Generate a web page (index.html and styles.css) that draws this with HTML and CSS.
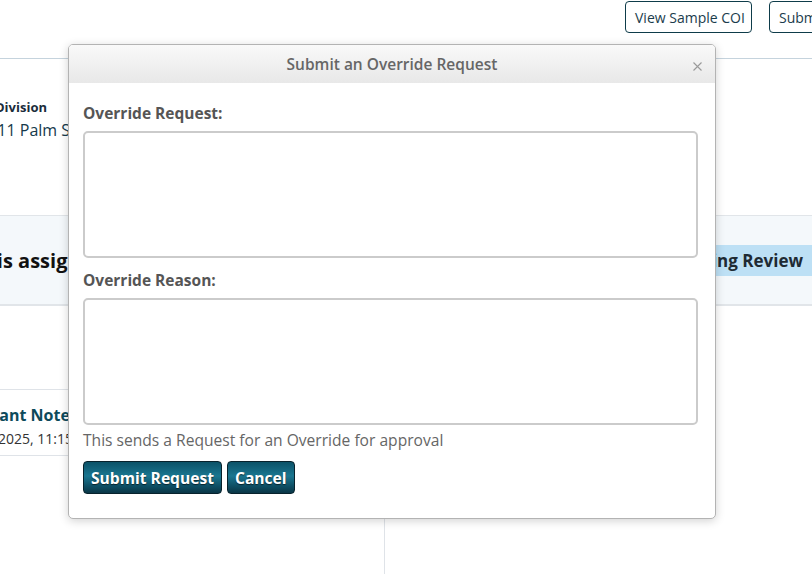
FILE: index.html
```html
<!DOCTYPE html>
<html lang="en">
<head>
<meta charset="utf-8">
<title>Submit an Override Request</title>
<link rel="stylesheet" href="styles.css">
</head>
<body>
<div class="page">
  <header class="topbar">
    <button class="outline-btn">View Sample COI</button>
    <button class="outline-btn">Submit Certificate</button>
  </header>

  <section class="info">
    <div class="info-label">Division</div>
    <div class="info-value">1211 Palm Street</div>
  </section>

  <section class="band">
    <h2 class="band-title">this assignment</h2>
    <span class="status-badge">Pending Review</span>
  </section>

  <section class="columns">
    <div class="col-left">
      <div class="note">
        <div class="note-title">Applicant Note</div>
        <div class="note-date">2025, 11:15 AM</div>
      </div>
    </div>
    <div class="col-right"></div>
  </section>

  <div class="dialog" role="dialog" aria-labelledby="dlg-title">
    <div class="dialog-head">
      <span id="dlg-title" class="dialog-title">Submit an Override Request</span>
      <svg class="dialog-close" width="9" height="9" viewBox="0 0 9 9" aria-hidden="true">
        <path d="M0.5 0.5 L8.5 8.5 M8.5 0.5 L0.5 8.5" stroke="#9a9a9a" stroke-width="1.1" fill="none"/>
      </svg>
    </div>
    <div class="dialog-body">
      <label class="field-label">Override Request:</label>
      <textarea class="field-area"></textarea>
      <label class="field-label">Override Reason:</label>
      <textarea class="field-area"></textarea>
      <p class="help-text">This sends a Request for an Override for approval</p>
      <div class="actions">
        <button class="primary-btn">Submit Request</button>
        <button class="primary-btn">Cancel</button>
      </div>
    </div>
  </div>
</div>
</body>
</html>
```

FILE: styles.css
```css
* { box-sizing: border-box; }
html, body { margin: 0; padding: 0; }
body {
  font-family: "Open Sans", "Noto Sans", "Liberation Sans", sans-serif;
  background: #fff;
  color: #222;
  width: 812px;
  height: 574px;
  overflow: hidden;
}
.page { position: relative; width: 812px; height: 574px; overflow: hidden; }

.topbar {
  height: 59px;
  border-bottom: 1px solid #c5d3dd;
  display: flex;
  align-items: flex-start;
  gap: 17px;
  padding: 1px 0 0 625px;
  white-space: nowrap;
}
.outline-btn {
  flex: none;
  height: 32px;
  padding: 0 9px;
  border: 1px solid #0e3c4a;
  border-radius: 4px;
  background: #fff;
  color: #1a3c4c;
  font-family: inherit;
  font-size: 14px;
}
.outline-btn:first-child { width: 127px; }

.info {
  height: 156px;
  padding-top: 39px;
  margin-left: -5px;
  white-space: nowrap;
}
.info-label { font-size: 13px; font-weight: 700; color: #1b2c3b; line-height: 18px; }
.info-value { font-size: 16px; color: #15394b; line-height: 24px; margin-left: -16px; margin-top: 2px; }

.band {
  height: 91px;
  background: #f4f8fb;
  border-top: 1px solid #e1e5e9;
  border-bottom: 2px solid #e1e5e9;
  display: flex;
  align-items: center;
  justify-content: space-between;
  white-space: nowrap;
}
.band-title {
  margin: 0 0 0 -25px;
  font-size: 20px;
  font-weight: 700;
  color: #111;
}
.status-badge {
  background: #bde0f5;
  font-size: 17px;
  font-weight: 700;
  color: #1e2a33;
  height: 31px;
  line-height: 31px;
  padding: 0 12px 0 16px;
  margin-right: -3px;
}

.columns {
  display: grid;
  grid-template-columns: 385px 1fr;
  height: 269px;
}
.col-left { border-right: 1px solid #dfe3e8; padding-top: 83px; }
.note {
  border-top: 1px solid #dfe3e8;
  border-bottom: 1px solid #dfe3e8;
  height: 67px;
  padding-top: 14px;
  margin-left: -50px;
  white-space: nowrap;
}
.note-title { font-size: 16px; font-weight: 700; color: #0d4a5b; line-height: 22px; }
.note-date { font-size: 14px; color: #333; line-height: 20px; margin-top: 3px; margin-left: 48px; }

.dialog {
  position: absolute;
  left: 68px;
  top: 44px;
  width: 648px;
  height: 475px;
  background: #fff;
  border: 1px solid #b3b3b3;
  border-radius: 5px;
  box-shadow: 0 2px 10px rgba(0, 0, 0, 0.18);
  overflow: hidden;
}
.dialog-head {
  height: 38px;
  background: linear-gradient(#f9f9f9, #e8e8e8);
  display: flex;
  align-items: center;
  justify-content: center;
  position: relative;
}
.dialog-title { font-size: 15.5px; font-weight: 600; color: #666; }
.dialog-close {
  position: absolute;
  right: 13px;
  top: 17px;
}
.dialog-body { padding: 19px 17px 0 14px; }
.field-label {
  display: block;
  font-size: 15.5px;
  font-weight: 700;
  color: #555;
  line-height: 22px;
  height: 29px;
}
.field-area {
  display: block;
  width: 615px;
  height: 127px;
  border: 2px solid #cbcbcb;
  border-radius: 5px;
  resize: none;
  margin: 0;
}
.field-area + .field-label { margin-top: 11px; }
.help-text {
  margin: 4px 0 0;
  font-size: 15.6px;
  color: #666;
  line-height: 22px;
}
.actions { display: flex; gap: 5px; margin-top: 10px; }
.primary-btn {
  height: 33px;
  padding: 0 7px;
  border: 1px solid #07222c;
  border-radius: 4px;
  background: linear-gradient(#0b5268, #1a7690 45%, #0d4c61 80%, #0a3646);
  color: #fff;
  font-family: inherit;
  font-size: 15.6px;
  font-weight: 700;
  text-shadow: 0 1px 1px rgba(0, 0, 0, 0.6);
}
```
